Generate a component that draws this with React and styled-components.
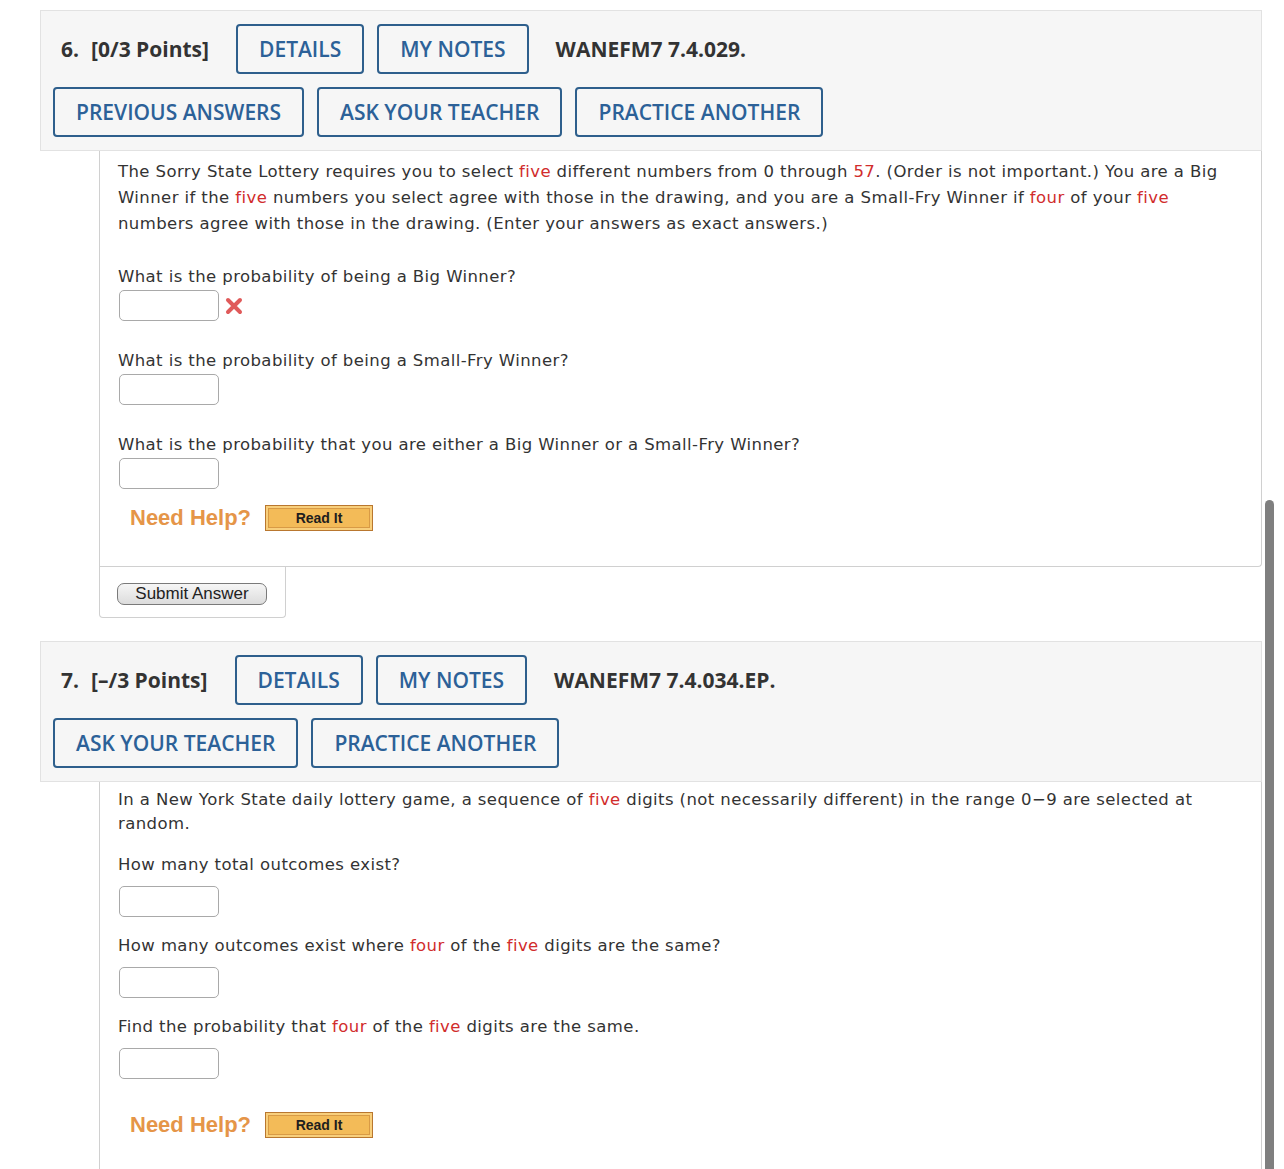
import styled, { createGlobalStyle } from "styled-components";

const GlobalStyle = createGlobalStyle`
  body {
    margin: 0;
    background: #ffffff;
    color: #333333;
    font-family: "DejaVu Sans", Verdana, sans-serif;
  }
`;

const questions = [
  {
    number: "6.",
    points: "[0/3 Points]",
    code: "WANEFM7 7.4.029.",
    topButtons: ["DETAILS", "MY NOTES"],
    bottomButtons: ["PREVIOUS ANSWERS", "ASK YOUR TEACHER", "PRACTICE ANOTHER"],
    intro: [
      "The Sorry State Lottery requires you to select ",
      { red: "five" },
      " different numbers from 0 through ",
      { red: "57" },
      ". (Order is not important.) You are a Big Winner if the ",
      { red: "five" },
      " numbers you select agree with those in the drawing, and you are a Small-Fry Winner if ",
      { red: "four" },
      " of your ",
      { red: "five" },
      " numbers agree with those in the drawing. (Enter your answers as exact answers.)",
    ],
    parts: [
      { text: ["What is the probability of being a Big Winner?"], wrong: true },
      { text: ["What is the probability of being a Small-Fry Winner?"] },
      { text: ["What is the probability that you are either a Big Winner or a Small-Fry Winner?"] },
    ],
    compact: false,
    submit: true,
  },
  {
    number: "7.",
    points: "[\u2013/3 Points]",
    code: "WANEFM7 7.4.034.EP.",
    topButtons: ["DETAILS", "MY NOTES"],
    bottomButtons: ["ASK YOUR TEACHER", "PRACTICE ANOTHER"],
    intro: [
      "In a New York State daily lottery game, a sequence of ",
      { red: "five" },
      " digits (not necessarily different) in the range 0\u22129 are selected at random.",
    ],
    parts: [
      { text: ["How many total outcomes exist?"] },
      { text: ["How many outcomes exist where ", { red: "four" }, " of the ", { red: "five" }, " digits are the same?"] },
      { text: ["Find the probability that ", { red: "four" }, " of the ", { red: "five" }, " digits are the same."] },
    ],
    compact: true,
    submit: false,
  },
];

function RichText({ pieces }) {
  return pieces.map((piece, i) =>
    typeof piece === "string" ? piece : <Red key={i}>{piece.red}</Red>
  );
}

function WrongMark() {
  return (
    <svg width="18" height="18" viewBox="0 0 18 18">
      <path d="M3 3 L15 15 M15 3 L3 15" stroke="#e05a5a" strokeWidth="4" strokeLinecap="round" />
    </svg>
  );
}

function Question({ q }) {
  return (
    <Block>
      <Header>
        <HeaderRow>
          <Label>
            <span>{q.number}</span>
            <span>{q.points}</span>
          </Label>
          {q.topButtons.map((b) => (
            <OutlineButton key={b}>{b}</OutlineButton>
          ))}
          <Code>{q.code}</Code>
        </HeaderRow>
        <HeaderRow>
          {q.bottomButtons.map((b) => (
            <OutlineButton key={b}>{b}</OutlineButton>
          ))}
        </HeaderRow>
      </Header>
      <Content $compact={q.compact}>
        <Paragraph $compact={q.compact}>
          <RichText pieces={q.intro} />
        </Paragraph>
        {q.parts.map((part, i) => (
          <Part key={i} $compact={q.compact}>
            <Paragraph $compact={q.compact}>
              <RichText pieces={part.text} />
            </Paragraph>
            <AnswerRow $compact={q.compact}>
              <AnswerInput />
              {part.wrong && <WrongMark />}
            </AnswerRow>
          </Part>
        ))}
        <HelpRow $compact={q.compact}>
          <HelpText>Need Help?</HelpText>
          <ReadIt>Read It</ReadIt>
        </HelpRow>
      </Content>
      {q.submit && (
        <SubmitBox>
          <SubmitButton>Submit Answer</SubmitButton>
        </SubmitBox>
      )}
    </Block>
  );
}

export default function App() {
  return (
    <>
      <GlobalStyle />
      <Page>
        {questions.map((q) => (
          <Question key={q.number} q={q} />
        ))}
      </Page>
      <ScrollThumb />
    </>
  );
}

const Page = styled.div`
  padding: 10px 22px 0 40px;
  display: flex;
  flex-direction: column;
  gap: 23px;
`;

const Block = styled.section`
  display: flex;
  flex-direction: column;
`;

const Header = styled.div`
  background: #f6f6f6;
  border: 1px solid #e2e2e2;
  padding: 13px 12px;
  display: flex;
  flex-direction: column;
  gap: 13px;
`;

const HeaderRow = styled.div`
  display: flex;
  align-items: center;
  gap: 13px;
`;

const Label = styled.div`
  display: flex;
  gap: 12px;
  margin: 0 14px 0 8px;
  font-family: "Open Sans", sans-serif;
  font-weight: 700;
  font-size: 21px;
  color: #333333;
`;

const Code = styled.div`
  margin-left: 14px;
  font-family: "Open Sans", sans-serif;
  font-weight: 700;
  font-size: 21px;
  color: #333333;
`;

const OutlineButton = styled.button`
  height: 50px;
  padding: 0 21px;
  border: 2px solid #2e5f8c;
  border-radius: 4px;
  background: transparent;
  color: #2c6198;
  font-family: "Open Sans", sans-serif;
  font-weight: 600;
  font-size: 21px;
  cursor: pointer;
`;

const Content = styled.div`
  margin-left: 59px;
  border: 1px solid #d0d0d0;
  border-top: none;
  border-bottom-right-radius: 4px;
  padding: ${(p) => (p.$compact ? "6px 18px 35px" : "8px 18px 35px")};
  font-size: 16.5px;
  letter-spacing: 0.41px;
  color: #333333;
`;

const Paragraph = styled.p`
  margin: 0;
  line-height: ${(p) => (p.$compact ? "24px" : "26px")};
`;

const Red = styled.span`
  color: #d12c2c;
`;

const Part = styled.div`
  margin-top: ${(p) => (p.$compact ? "17px" : "27px")};
`;

const AnswerRow = styled.div`
  display: flex;
  align-items: center;
  gap: 6px;
  margin-top: ${(p) => (p.$compact ? "9px" : "0")};
  padding-left: 1px;
`;

const AnswerInput = styled.div`
  box-sizing: border-box;
  width: 100px;
  height: 31px;
  border: 1px solid #a9a9a9;
  border-radius: 5px;
  background: #ffffff;
`;

const HelpRow = styled.div`
  display: flex;
  align-items: center;
  gap: 14px;
  height: 26px;
  margin-top: ${(p) => (p.$compact ? "33px" : "16px")};
  padding-left: 12px;
`;

const HelpText = styled.span`
  font-family: "Liberation Sans", Arial, sans-serif;
  font-weight: 700;
  font-size: 22px;
  line-height: 26px;
  letter-spacing: 0;
  color: #e59548;
`;

const ReadIt = styled.button`
  width: 108px;
  height: 26px;
  padding: 0;
  border: 1px solid #b9772f;
  background: #f3bb58;
  box-shadow: inset 0 0 0 2px #f8cf7c, inset 0 0 0 3px #d89a45;
  font-family: "Liberation Sans", Arial, sans-serif;
  font-weight: 700;
  font-size: 14px;
  color: #1e1e1e;
`;

const SubmitBox = styled.div`
  align-self: flex-start;
  box-sizing: border-box;
  margin-left: 59px;
  width: 187px;
  padding: 16px 0 12px 17px;
  border: 1px solid #d0d0d0;
  border-top: none;
  border-bottom-left-radius: 4px;
  border-bottom-right-radius: 4px;
`;

const SubmitButton = styled.button`
  display: block;
  width: 150px;
  height: 22px;
  padding: 0;
  border: 1px solid #7a7a7a;
  border-radius: 7px;
  background: linear-gradient(#f6f6f6, #dcdcdc);
  font-family: "Liberation Sans", Arial, sans-serif;
  font-size: 17px;
  color: #222222;
`;

const ScrollThumb = styled.div`
  position: fixed;
  right: 10px;
  top: 500px;
  width: 9px;
  height: 700px;
  border-radius: 5px;
  background: #7f7f7f;
`;
